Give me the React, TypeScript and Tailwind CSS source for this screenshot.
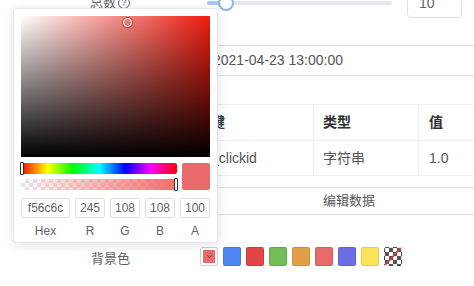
import { ChevronDown } from "lucide-react";

const SWATCHES = ["#4f86f2", "#e04444", "#72bd55", "#e0a046", "#e96a6a", "#6c6ce4", "#fbe35a"];

const FIELDS = [
  { label: "Hex", value: "f56c6c", w: "w-[49px]" },
  { label: "R", value: "245", w: "w-[30px]" },
  { label: "G", value: "108", w: "w-[30px]" },
  { label: "B", value: "108", w: "w-[30px]" },
  { label: "A", value: "100", w: "w-[30px]" },
];

function Label({ children }: { children: React.ReactNode }) {
  return <div className="w-[130px] shrink-0 text-right text-[13px] text-[#606266]">{children}</div>;
}

/** Element-style colour picker dropdown, open over the form. */
function PickerPanel() {
  return (
    <div className="absolute left-[13px] top-[8px] w-[205px] rounded-[4px] border border-[#e4e7ed] bg-white px-[7px] pt-[7px] pb-[4px] shadow-[0_2px_12px_rgba(0,0,0,0.12)]">
      {/* saturation / value */}
      <div className="relative h-[141px] w-[189px] bg-[#ee1c10]">
        <div className="absolute inset-0 bg-[linear-gradient(to_right,#fff,rgba(255,255,255,0))]" />
        <div className="absolute inset-0 bg-[linear-gradient(to_top,#000,rgba(0,0,0,0))]" />
        <div className="absolute left-[102px] top-[2px] h-[9px] w-[9px] rounded-full border border-white shadow-[0_0_1px_1px_rgba(0,0,0,0.3)]" />
      </div>

      <div className="mt-[6px] flex gap-[5px]">
        <div className="flex w-[156px] flex-col gap-[5px]">
          <div className="relative h-[11px] rounded-[2px] bg-[linear-gradient(to_right,#f00_0%,#ff0_17%,#0f0_33%,#0ff_50%,#00f_67%,#f0f_83%,#f00_100%)]">
            <div className="absolute -left-[1px] -top-[1px] h-[13px] w-[4px] rounded-[1px] border border-[#333] bg-white" />
          </div>
          <div className="relative h-[11px] rounded-[2px] bg-[repeating-conic-gradient(#e6e6e6_0%_25%,#fff_0%_50%)] bg-[length:8px_8px]">
            <div className="absolute inset-0 rounded-[2px] bg-[linear-gradient(to_right,rgba(245,108,108,0),#f56c6c)]" />
            <div className="absolute -right-[1px] -top-[1px] h-[13px] w-[4px] rounded-[1px] border border-[#333] bg-white" />
          </div>
        </div>
        <div className="h-[27px] w-[28px] rounded-[2px] bg-[#e96a6a]" />
      </div>

      <div className="mt-[8px] flex gap-[5px]">
        {FIELDS.map((f) => (
          <div key={f.label} className={`flex flex-col items-center ${f.w}`}>
            <div className="flex h-[20px] w-full items-center justify-center rounded-[2px] border border-[#dcdfe6] text-[12px] text-[#606266]">
              {f.value}
            </div>
            <div className="mt-[6px] text-[12px] leading-[14px] text-[#606266]">{f.label}</div>
          </div>
        ))}
      </div>
    </div>
  );
}

export default function App() {
  return (
    <div className="relative h-[286px] w-[474px] overflow-hidden bg-white font-['Liberation_Sans','Noto_Sans_CJK_SC',sans-serif]">
      <div className="-mt-[13px] flex w-[520px] flex-col">
        {/* 总数 */}
        <div className="flex h-[32px] items-center">
          <Label>
            <span className="inline-flex items-center gap-[2px]">
              总数
              <span className="inline-flex h-[12px] w-[12px] items-center justify-center rounded-full border border-[#606266] text-[9px]">
                ?
              </span>
            </span>
          </Label>
          <div className="ml-[70px] flex items-center">
            <div className="relative ml-[7px] h-[4px] w-[185px] rounded-full bg-[#e4e7ed]">
              <div className="absolute left-0 top-0 h-[4px] w-[18px] rounded-full bg-[#409eff]/40" />
              <div className="absolute left-[11px] -top-[6px] h-[16px] w-[16px] rounded-full border-2 border-[#8ab8ea] bg-white" />
            </div>
            <div className="ml-[15px] flex h-[29px] w-[55px] items-center rounded-[4px] border border-[#dcdfe6] pl-[11px] text-[14px] text-[#606266]">
              10
            </div>
          </div>
        </div>

        {/* 时间 */}
        <div className="mt-[26px] flex items-center">
          <Label>开始时间</Label>
          <div className="ml-[70px] flex h-[31px] w-[298px] shrink-0 items-center rounded-[4px] border border-[#dcdfe6] pl-[12px] text-[14px] text-[#555]">
            2021-04-23 13:00:00
          </div>
        </div>

        {/* 数据 */}
        <div className="mt-[28px] flex">
          <Label>数据</Label>
          <div className="ml-[70px] w-[298px] shrink-0">
            <div className="grid grid-cols-[113px_105px_1fr] border border-[#ebeef5] text-[14px] text-[#555]">
              <div className="flex h-[36px] items-center border-b border-r border-[#ebeef5] px-[10px] font-bold text-[#303133]">键</div>
              <div className="flex h-[36px] items-center border-b border-r border-[#ebeef5] px-[9px] font-bold text-[#303133]">类型</div>
              <div className="flex h-[36px] items-center border-b border-[#ebeef5] px-[10px] font-bold text-[#303133]">值</div>
              <div className="flex h-[34px] items-center border-r border-[#ebeef5] px-[10px]">_clickid</div>
              <div className="flex h-[34px] items-center border-r border-[#ebeef5] px-[9px]">字符串</div>
              <div className="flex h-[34px] items-center px-[10px]">1.0</div>
            </div>
            <div className="mt-[11px] flex h-[28px] items-center justify-center rounded-[3px] border border-[#dcdfe6] text-[13px] text-[#555]">
              编辑数据
            </div>
          </div>
        </div>

        {/* 背景色 */}
        <div className="mt-[32px] flex items-center">
          <Label>
            <span className="relative top-[2px]">背景色</span>
          </Label>
          <div className="ml-[70px] flex gap-[5px]">
            <div className="flex h-[19px] w-[18px] items-center justify-center rounded-[2px] border border-[#d0d0d0] bg-white p-[2px]">
              <div className="flex h-full w-full items-center justify-center rounded-[1px] bg-[#e96a6a]">
                <ChevronDown className="h-[9px] w-[9px] text-[#7a1a1a]" strokeWidth={2} />
              </div>
            </div>
            {SWATCHES.map((c) => (
              <div key={c} className="h-[19px] w-[18px] rounded-[2px] border border-black/10" style={{ backgroundColor: c }} />
            ))}
            <div className="relative h-[19px] w-[18px] overflow-hidden rounded-[2px] border border-black/10 bg-[repeating-conic-gradient(#555_0%_25%,#fff_0%_50%)] bg-[length:8px_8px]">
              <svg viewBox="0 0 18 19" className="absolute inset-0 h-full w-full">
                <line x1="0" y1="19" x2="18" y2="0" stroke="#d43a3a" strokeWidth="2" />
              </svg>
            </div>
          </div>
        </div>
      </div>

      <PickerPanel />
    </div>
  );
}
